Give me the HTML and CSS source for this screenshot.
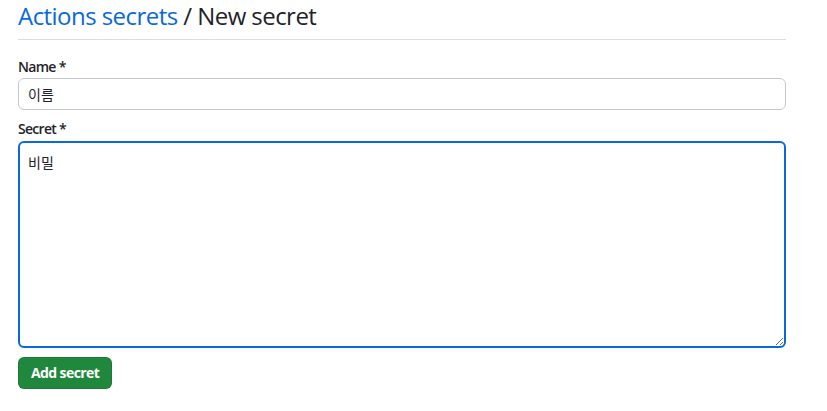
FILE: index.html
```html
<!DOCTYPE html>
<html lang="ko">
<head>
<meta charset="utf-8">
<title>New secret</title>
<link rel="stylesheet" href="styles.css">
</head>
<body>
<main class="page">
  <h1 class="title"><a class="crumb" href="#">Actions secrets</a> / New secret</h1>
  <form class="form">
    <div class="field">
      <label class="label" for="name">Name *</label>
      <input class="input" id="name" type="text" value="이름">
    </div>
    <div class="field field-secret">
      <label class="label" for="secret">Secret *</label>
      <textarea class="textarea" id="secret">비밀</textarea>
    </div>
    <div class="actions">
      <button class="btn" type="button">Add secret</button>
    </div>
  </form>
</main>
</body>
</html>
```

FILE: styles.css
```css
html, body {
  margin: 0;
  padding: 0;
  background: #ffffff;
}
body {
  font-family: "Open Sans", "Noto Sans", "Noto Sans CJK KR", sans-serif;
  color: #1f2328;
  font-size: 14px;
}
.page {
  width: 768px;
  padding-left: 18px;
}
.title {
  margin: 0;
  font-size: 24px;
  font-weight: 400;
  line-height: 32px;
  letter-spacing: -0.55px;
  padding-bottom: 7px;
  border-bottom: 1px solid #d8dee4;
  color: #1f2328;
}
.crumb {
  color: #0969da;
  text-decoration: none;
}
.form {
  display: flex;
  flex-direction: column;
  padding-top: 17px;
}
.field {
  display: flex;
  flex-direction: column;
  gap: 1px;
}
.field-secret {
  gap: 2px;
}
.label {
  font-weight: 600;
  font-size: 14px;
  line-height: 20px;
  letter-spacing: -0.7px;
}
.input, .textarea {
  font-family: "Noto Sans CJK KR", "Open Sans", sans-serif;
  font-size: 14px;
  line-height: 20px;
  color: #1f2328;
  box-sizing: border-box;
  width: 768px;
  border: 1px solid #c4c8cc;
  border-radius: 6px;
  padding: 5px 9px;
  outline: none;
  background: #fff;
}
.input {
  height: 32px;
  margin-bottom: 9px;
}
.textarea {
  height: 207px;
  border: 2px solid #0969da;
  padding: 9px 8px 7px;
  resize: vertical;
  display: block;
}
.actions {
  padding-top: 9px;
}
.btn {
  font-family: "Open Sans", "Noto Sans", sans-serif;
  font-weight: 700;
  font-size: 14px;
  line-height: 20px;
  letter-spacing: -0.6px;
  height: 32px;
  padding: 0 12px;
  color: #ffffff;
  background: #1f883d;
  border: 1px solid rgba(31, 35, 40, 0.15);
  border-radius: 6px;
}
```
